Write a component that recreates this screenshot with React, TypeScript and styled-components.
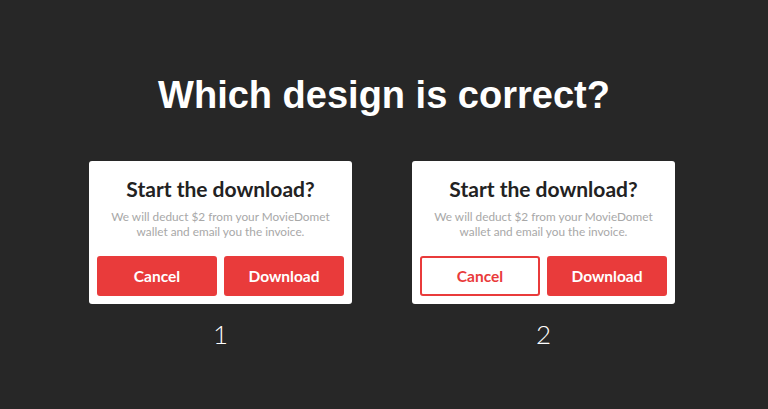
import React from 'react'
import styled, { createGlobalStyle } from 'styled-components'

const GlobalStyle = createGlobalStyle`
  html, body {
    margin: 0;
    padding: 0;
    background: #272727;
  }
  body {
    font-family: "Liberation Sans", Arial, sans-serif;
  }
`

const Page = styled.div`
  width: 768px;
  height: 409px;
  display: flex;
  flex-direction: column;
  align-items: center;
  background: #272727;
  overflow: hidden;
`

const Heading = styled.h1`
  margin: 72px 0 0;
  font-family: "Liberation Sans", Arial, sans-serif;
  font-weight: 700;
  font-size: 38px;
  line-height: 46px;
  color: #ffffff;
`

const Options = styled.div`
  display: flex;
  gap: 60px;
  margin-top: 43px;
  margin-left: -4px;
`

const Option = styled.div`
  display: flex;
  flex-direction: column;
  align-items: center;
`

const Dialog = styled.div`
  width: 263px;
  height: 143px;
  box-sizing: border-box;
  background: #ffffff;
  border-radius: 3px;
  padding: 15px 8px 8px;
  display: flex;
  flex-direction: column;
  align-items: center;
`

const DialogTitle = styled.div`
  font-family: Lato, "Noto Sans", sans-serif;
  font-weight: 700;
  font-size: 21px;
  line-height: 26px;
  color: #222222;
`

const DialogText = styled.p`
  margin: 7px 0 0;
  font-family: Lato, "Noto Sans", sans-serif;
  font-size: 11.8px;
  line-height: 15px;
  color: #a8a8a8;
  text-align: center;
`

const Buttons = styled.div`
  margin-top: auto;
  width: 100%;
  display: grid;
  grid-template-columns: 1fr 1fr;
  gap: 7px;
`

const Button = styled.button<{ $outline?: boolean }>`
  height: 40px;
  box-sizing: border-box;
  border-radius: 3px;
  border: 2px solid #e93b3b;
  background: ${(p) => (p.$outline ? '#ffffff' : '#e93b3b')};
  color: ${(p) => (p.$outline ? '#e93b3b' : '#ffffff')};
  font-family: Lato, "Noto Sans", sans-serif;
  font-weight: 700;
  font-size: 15.5px;
  padding: 0;
  cursor: pointer;
`

const Label = styled.div`
  margin-top: 15px;
  font-family: Lato, "Noto Sans", sans-serif;
  font-weight: 300;
  font-size: 26px;
  line-height: 30px;
  color: #ffffff;
`

function DownloadDialog({ outlineCancel }: { outlineCancel?: boolean }) {
  return (
    <Dialog>
      <DialogTitle>Start the download?</DialogTitle>
      <DialogText>
        We will deduct $2 from your MovieDomet
        <br />
        wallet and email you the invoice.
      </DialogText>
      <Buttons>
        <Button $outline={outlineCancel}>Cancel</Button>
        <Button>Download</Button>
      </Buttons>
    </Dialog>
  )
}

export default function App() {
  return (
    <>
      <GlobalStyle />
      <Page>
        <Heading>Which design is correct?</Heading>
        <Options>
          <Option>
            <DownloadDialog />
            <Label>1</Label>
          </Option>
          <Option>
            <DownloadDialog outlineCancel />
            <Label>2</Label>
          </Option>
        </Options>
      </Page>
    </>
  )
}
